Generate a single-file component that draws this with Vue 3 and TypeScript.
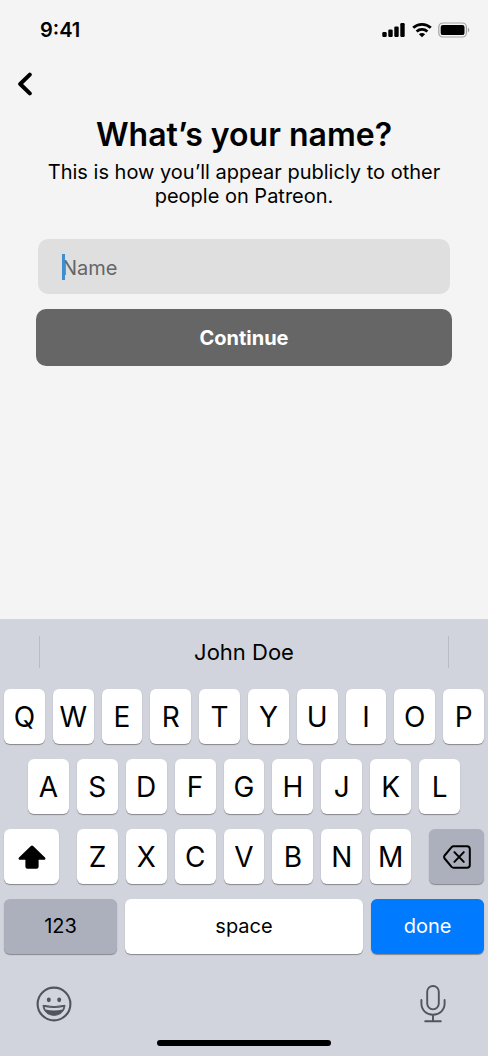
<script setup lang="ts">
import { ref } from 'vue'

const name = ref<string>('')
const suggestion = 'John Doe'
const topRow: string[] = [...'QWERTYUIOP']
const middleRow: string[] = [...'ASDFGHJKL']
const bottomRow: string[] = [...'ZXCVBNM']

function type(text: string): void {
  name.value += text
}

function erase(): void {
  name.value = name.value.slice(0, -1)
}
</script>

<template>
  <div class="screen">
    <header class="status">
      <span class="time">9:41</span>
      <div class="indicators">
        <svg width="24" height="16" viewBox="0 0 24 16" aria-label="Signal">
          <rect x="0.3" y="10" width="4.4" height="5" rx="1.2" />
          <rect x="6.3" y="7.5" width="4.4" height="7.5" rx="1.2" />
          <rect x="12.3" y="4.5" width="4.4" height="10.5" rx="1.2" />
          <rect x="18.3" y="1" width="4.4" height="14" rx="1.2" />
        </svg>
        <svg width="20" height="16" viewBox="0 0 20 16" aria-label="Wi-Fi">
          <g fill="none" stroke="#000" stroke-width="2.8">
            <path d="M1.2 5.8C6.2 1.1 13.8 1.1 18.8 5.8" />
            <path d="M4.6 9.5C7.7 6.7 12.3 6.7 15.4 9.5" />
          </g>
          <path d="M10 15.2L6.9 12.3C8.6 10.7 11.4 10.7 13.1 12.3Z" />
        </svg>
        <svg width="32" height="16" viewBox="0 0 32 16" aria-label="Battery">
          <rect x="0.8" y="1" width="27.6" height="14" rx="4" fill="none" stroke="#a3a3a3" stroke-width="1.2" />
          <rect x="2.7" y="2.9" width="23.8" height="10.2" rx="2.2" />
          <path d="M29.8 5.6C31.8 6.4 31.8 9.6 29.8 10.4Z" fill="#a3a3a3" />
        </svg>
      </div>
    </header>

    <main class="content">
      <button class="back" type="button" aria-label="Back">
        <svg width="16" height="24" viewBox="0 0 16 24">
          <path d="M12.8 2.6L3.2 12L12.8 21.4" fill="none" stroke="#000" stroke-width="4" stroke-linecap="round" stroke-linejoin="round" />
        </svg>
      </button>
      <h1>What’s your name?</h1>
      <p class="intro">This is how you’ll appear publicly to other people on Patreon.</p>
      <form class="form" @submit.prevent>
        <div class="field">
          <input v-model="name" type="text" placeholder="Name" aria-label="Name" />
          <span v-if="!name" class="caret"></span>
        </div>
        <button class="continue" type="submit">Continue</button>
      </form>
    </main>

    <section class="keyboard" aria-label="Keyboard">
      <div class="suggestions">
        <button type="button" @click="name = suggestion">{{ suggestion }}</button>
      </div>
      <div class="rows">
        <div class="row">
          <button v-for="k in topRow" :key="k" class="key" type="button" @click="type(k)">{{ k }}</button>
        </div>
        <div class="row middle">
          <button v-for="k in middleRow" :key="k" class="key" type="button" @click="type(k)">{{ k }}</button>
        </div>
        <div class="row bottom">
          <button class="key side" type="button" aria-label="Shift">
            <svg width="28" height="24" viewBox="0 0 28 24">
              <path d="M12.9 1Q14 0 15.1 1L27 12.6Q28.2 14.6 26.2 14.8H20.6V21.8Q20.6 23.8 18.6 23.8H9.4Q7.4 23.8 7.4 21.8V14.8H1.8Q-0.2 14.6 1 12.6Z" />
            </svg>
          </button>
          <div class="row letters">
            <button v-for="k in bottomRow" :key="k" class="key" type="button" @click="type(k)">{{ k }}</button>
          </div>
          <button class="key side gray" type="button" aria-label="Delete" @click="erase">
            <svg width="28" height="24" viewBox="0 0 28 24" fill="none" stroke="#000" stroke-width="2" stroke-linecap="round" stroke-linejoin="round">
              <path d="M10.6 1.3H24Q26.8 1.3 26.8 4.1V19.9Q26.8 22.7 24 22.7H10.6Q9.4 22.7 8.6 21.9L1.6 13.5Q0.6 12 1.6 10.5L8.6 2.1Q9.4 1.3 10.6 1.3Z" />
              <path d="M11.4 7.1L20.8 16.9M20.8 7.1L11.4 16.9" />
            </svg>
          </button>
        </div>
        <div class="row">
          <button class="key wide gray" type="button">123</button>
          <button class="key space" type="button" @click="type(' ')">space</button>
          <button class="key wide done" type="button">done</button>
        </div>
      </div>
      <div class="tools">
        <button type="button" aria-label="Emoji">
          <svg width="36" height="36" viewBox="0 0 36 36">
            <circle cx="18" cy="18" r="16.4" fill="none" stroke="#50545c" stroke-width="2.1" />
            <ellipse cx="12.8" cy="13.8" rx="2" ry="2.4" fill="#50545c" />
            <ellipse cx="23.2" cy="13.8" rx="2" ry="2.4" fill="#50545c" />
            <path d="M7 19.3Q18 22 29 19.3C28.4 25.6 24 29.3 18 29.3S7.6 25.6 7 19.3Z" fill="#50545c" stroke="#50545c" stroke-width="1" stroke-linejoin="round" />
            <path d="M8.6 21Q18 23.2 27.4 21L26.5 23.5Q18 25.4 9.5 23.5Z" fill="#d1d4dc" />
          </svg>
        </button>
        <button type="button" aria-label="Dictate">
          <svg width="26" height="38" viewBox="0 0 26 38" fill="none" stroke="#50545c" stroke-width="1.9" stroke-linecap="round">
            <rect x="7.2" y="1" width="11.6" height="23.4" rx="5.8" />
            <path d="M1.4 15V18.6C1.4 25.2 6.4 29.8 13 29.8S24.6 25.2 24.6 18.6V15M13 29.8V36M5.2 36.3H20.8" />
          </svg>
        </button>
      </div>
      <div class="home"></div>
    </section>
  </div>
</template>

<style>
body {
  margin: 0;
}
</style>

<style scoped>
.screen {
  min-height: 100vh;
  display: flex;
  flex-direction: column;
  background: #f4f4f4;
  color: #000;
  font-family: Inter, "Liberation Sans", sans-serif;
}

button {
  padding: 0;
  border: 0;
  background: none;
  color: inherit;
  font: inherit;
}

svg {
  display: block;
}

.status {
  display: flex;
  align-items: center;
  justify-content: space-between;
  height: 60px;
  padding: 0 18px 0 40px;
}

.time {
  font-size: 20px;
  font-weight: 600;
}

.indicators {
  display: flex;
  gap: 6px;
}

.content {
  flex: 1;
  display: flex;
  flex-direction: column;
}

.back {
  align-self: flex-start;
  margin: 12px 0 0 17px;
}

h1 {
  margin: 19px 0 0;
  font-size: 32px;
  font-weight: 600;
  line-height: 40px;
  text-align: center;
}

.intro {
  margin: 5px 40px 0;
  font-size: 20px;
  line-height: 24px;
  text-align: center;
}

.form {
  display: flex;
  flex-direction: column;
  gap: 15px;
  margin: 31px 36px 0;
}

.field {
  position: relative;
  display: flex;
  margin: 0 2px;
}

input {
  box-sizing: border-box;
  flex: 1;
  min-width: 0;
  height: 55px;
  padding: 2px 24px 0;
  border: 0;
  border-radius: 10px;
  outline: none;
  background: #dfdfdf;
  color: #000;
  font: inherit;
  font-size: 20px;
}

input::placeholder {
  color: #666;
  opacity: 1;
}

.caret {
  position: absolute;
  top: 15px;
  left: 24px;
  width: 3px;
  height: 26px;
  background: #3e8ed0;
}

.continue {
  height: 57px;
  border-radius: 10px;
  background: #666;
  color: #fff;
  font-size: 20px;
  font-weight: 700;
}

.keyboard {
  background: #d1d4dc;
}

.suggestions {
  display: flex;
  justify-content: center;
  height: 32px;
  margin: 17px 39px 21px;
  border: solid #b9bcc3;
  border-width: 0 1px;
  font-size: 22px;
}

.rows {
  display: flex;
  flex-direction: column;
  gap: 15px;
  padding: 0 4px;
}

.row {
  display: flex;
  gap: 8px;
}

.middle {
  padding: 0 24px;
}

.bottom {
  gap: 18px;
}

.letters {
  flex: 1;
}

.key {
  display: flex;
  flex: 1 1 0;
  align-items: center;
  justify-content: center;
  min-width: 0;
  height: 55px;
  border-radius: 6px;
  background: #fff;
  box-shadow: 0 1px 1px #85878c;
  font-size: 28px;
}

.side {
  flex: 0 0 55px;
}

.gray {
  background: #abb0bc;
}

.wide,
.space {
  padding-bottom: 2px;
  box-sizing: border-box;
  font-size: 20px;
}

.wide {
  flex: 0 0 113px;
}

.done {
  background: #007aff;
  color: #fff;
}

.tools {
  display: flex;
  align-items: center;
  justify-content: space-between;
  margin-top: 31px;
  padding: 0 42px 0 36px;
}

.home {
  width: 174px;
  height: 6px;
  margin: 17px auto 10px;
  border-radius: 3px;
  background: #000;
}
</style>
